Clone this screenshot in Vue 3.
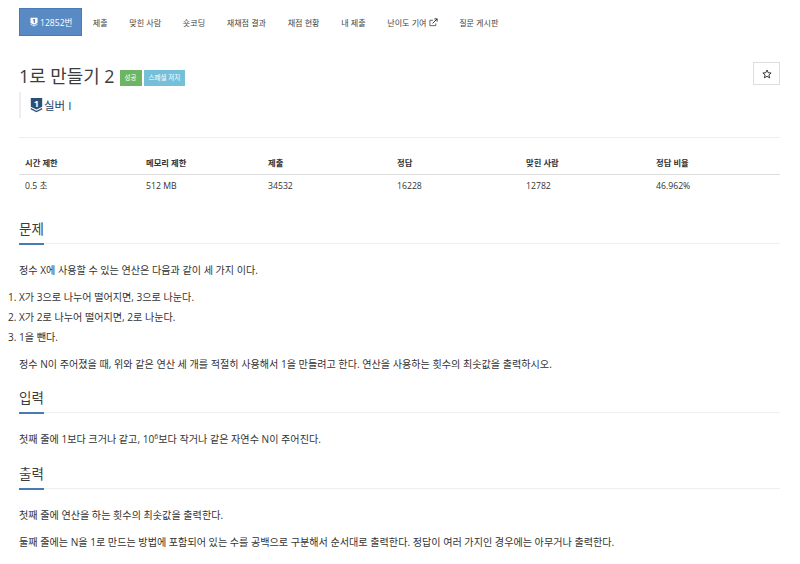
<script setup>
const tabs = ['제출', '맞힌 사람', '숏코딩', '재채점 결과', '채점 현황', '내 제출']
const stats = [
  ['시간 제한', '0.5 초'],
  ['메모리 제한', '512 MB'],
  ['제출', '34532'],
  ['정답', '16228'],
  ['맞힌 사람', '12782'],
  ['정답 비율', '46.962%']
]
</script>

<template>
  <div class="page">
    <nav class="tabs">
      <a class="tab active">
        <svg class="tier small" viewBox="0 0 16 19">
          <path d="M1 1h14v10.5l-7 3.5-7-3.5z" fill="#fff" />
          <path d="M1 14l7 3.5 7-3.5" fill="none" stroke="#fff" stroke-width="1.6" />
          <text x="8" y="12" text-anchor="middle" font-size="12" font-weight="700" fill="#34587f">1</text>
        </svg>
        12852번
      </a>
      <a v-for="t in tabs" :key="t" class="tab">{{ t }}</a>
      <a class="tab">
        난이도 기여
        <svg class="ext" viewBox="0 0 10 10">
          <path d="M7.5 6v2.5h-6.5v-6h3.5" fill="none" stroke="#444" stroke-width="0.9" />
          <path d="M4 6l5-5M6 1h3v3" fill="none" stroke="#333" stroke-width="1.1" />
        </svg>
      </a>
      <a class="tab">질문 게시판</a>
    </nav>

    <header class="head">
      <div class="title-row">
        <h1>1로 만들기 2</h1>
        <span class="label green">성공</span>
        <span class="label blue">스페셜 저지</span>
      </div>
      <button class="star">
        <svg viewBox="0 0 10 10">
          <path d="M5 1l1.2 2.7 2.9.3-2.2 1.9.7 2.9L5 7.3 2.4 8.8l.7-2.9L.9 4l2.9-.3z" fill="none" stroke="#222" stroke-width="0.9" />
        </svg>
      </button>
    </header>

    <div class="tier-line">
      <svg class="tier" viewBox="0 0 16 19">
        <path d="M1 1h14v10.5l-7 3.5-7-3.5z" fill="#2c4f76" />
        <path d="M1 14l7 3.5 7-3.5" fill="none" stroke="#2c4f76" stroke-width="1.6" />
        <text x="8" y="11.5" text-anchor="middle" font-size="11.5" font-weight="700" fill="#fff">1</text>
      </svg>
      <span>실버 I</span>
    </div>

    <hr class="rule" />

    <div class="stats">
      <div v-for="s in stats" :key="s[0]" class="stat">
        <div class="stat-head">{{ s[0] }}</div>
        <div class="stat-val">{{ s[1] }}</div>
      </div>
    </div>

    <section class="first">
      <h2><span>문제</span></h2>
      <p>정수 X에 사용할 수 있는 연산은 다음과 같이 세 가지 이다.</p>
      <ol>
        <li>X가 3으로 나누어 떨어지면, 3으로 나눈다.</li>
        <li>X가 2로 나누어 떨어지면, 2로 나눈다.</li>
        <li>1을 뺀다.</li>
      </ol>
      <p>정수 N이 주어졌을 때, 위와 같은 연산 세 개를 적절히 사용해서 1을 만들려고 한다. 연산을 사용하는 횟수의 최솟값을 출력하시오.</p>
    </section>

    <section>
      <h2><span>입력</span></h2>
      <p>첫째 줄에 1보다 크거나 같고, 10<sup>6</sup>보다 작거나 같은 자연수 N이 주어진다.</p>
    </section>

    <section class="last">
      <h2><span>출력</span></h2>
      <p>첫째 줄에 연산을 하는 횟수의 최솟값을 출력한다.</p>
      <p>둘째 줄에는 N을 1로 만드는 방법에 포함되어 있는 수를 공백으로 구분해서 순서대로 출력한다. 정답이 여러 가지인 경우에는 아무거나 출력한다.</p>
    </section>
  </div>
</template>

<style scoped>
.page {
  width: 800px;
  height: 564px;
  overflow: hidden;
  box-sizing: border-box;
  padding: 8px 20px 0 19px;
  background: #fff;
  color: #333;
  font-family: "Open Sans", "Noto Sans CJK KR", sans-serif;
  font-size: 10px;
}

.tabs {
  display: flex;
  height: 28px;
}

.tab {
  display: flex;
  align-items: center;
  padding: 0 10.8px;
  font-size: 8.1px;
  color: #444;
  white-space: nowrap;
}

.tab.active {
  width: 63px;
  box-sizing: border-box;
  padding: 0 0 0 10px;
  background: #5a8ac4;
  border: 1px solid #4a7ab4;
  color: #fff;
  font-size: 8.6px;
}

.tier {
  width: 13px;
  height: 16px;
  margin-right: 1px;
  font-family: "Open Sans", sans-serif;
}

.tier.small {
  width: 8px;
  height: 10px;
  margin-right: 2px;
}

.ext {
  width: 9px;
  height: 9px;
  margin-left: 2px;
}

.head {
  display: flex;
  justify-content: space-between;
  align-items: flex-start;
  margin-top: 26px;
}

.title-row {
  display: flex;
  align-items: center;
  gap: 2px;
  height: 26px;
}

h1 {
  margin: 0 3px 0 0;
  font-size: 17.9px;
  font-weight: 400;
  color: #3c3c3c;
}

.label {
  height: 16px;
  margin-top: 5px;
  padding: 0 5px;
  font-size: 6.5px;
  line-height: 16px;
  color: #fff;
}

.green {
  background: #6cb562;
}

.blue {
  background: #76bfd9;
}

.star {
  display: flex;
  align-items: center;
  justify-content: center;
  width: 27px;
  height: 23px;
  padding: 0;
  background: #fff;
  border: 1px solid #ddd;
}

.star svg {
  width: 10px;
  height: 10px;
}

.tier-line {
  display: flex;
  align-items: center;
  height: 26px;
  margin-top: 4px;
  padding-left: 9px;
  border-left: 2px solid #eee;
  font-size: 11.5px;
  color: #1f3f63;
}

.rule {
  margin: 19px 0 0;
  border: 0;
  border-top: 1px solid #eee;
}

.stats {
  display: grid;
  grid-template-columns: 121fr 122fr 129fr 129fr 130fr 130fr;
  margin-top: 15px;
}

.stat-head {
  padding: 0 6px;
  height: 21px;
  line-height: 19px;
  border-bottom: 1px solid #ddd;
  font-size: 8.3px;
  font-weight: 700;
}

.stat-val {
  padding: 0 6px;
  height: 22px;
  line-height: 22px;
  font-size: 8.7px;
}

section {
  margin-top: 16px;
}

section.first {
  margin-top: 22px;
}

section.last {
  margin-top: 17px;
}

h2 {
  margin: 0 0 7px;
  height: 24px;
  border-bottom: 1px solid #eee;
  font-size: 13.5px;
  line-height: 20px;
  font-weight: 400;
  color: #3c3c3c;
}

h2 span {
  display: inline-block;
  height: 24px;
  border-bottom: 2px solid #4a7ab4;
}

p {
  margin: 0;
  padding-top: 12px;
  font-size: 10.1px;
  line-height: 15px;
}

ol {
  margin: 9px 0 -2px;
  padding-left: 0;
  font-size: 10.1px;
  line-height: 20px;
}

sup {
  font-size: 7px;
  line-height: 0;
}
</style>
